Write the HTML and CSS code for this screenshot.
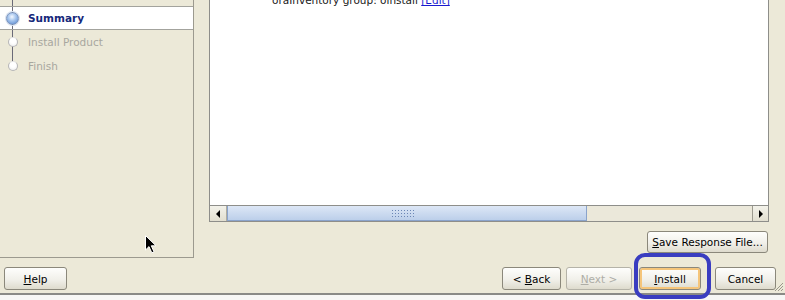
FILE: index.html
```html
<!DOCTYPE html>
<html lang="en">
<head>
    <meta charset="UTF-8">
    <title>Install - Summary</title>
    <link rel="stylesheet" href="styles.css">
</head>
<body>
    <div class="window">
        <div class="main">
            <div class="steps">
                <div class="step-gap"></div>
                <div class="step current"><span class="mark"><span class="node"></span></span>Summary</div>
                <div class="step"><span class="mark"><span class="dot"></span></span>Install Product</div>
                <div class="step last"><span class="mark"><span class="dot"></span></span>Finish</div>
            </div>
            <div class="content">
                <div class="panel">
                    <div class="view">
                        <div class="tree-row"><span class="branch"></span>oraInventory group: oinstall <a href="#">[Edit]</a></div>
                    </div>
                    <div class="hscroll">
                        <div class="arrow left"><span class="tri"></span></div>
                        <div class="track">
                            <div class="thumb"><span class="grip"></span></div>
                        </div>
                        <div class="arrow right"><span class="tri"></span></div>
                    </div>
                </div>
                <div class="panel-actions">
                    <button class="btn save"><u>S</u>ave Response File...</button>
                </div>
            </div>
        </div>

        <div class="footer">
            <button class="btn help"><u>H</u>elp</button>
            <div class="nav">
                <button class="btn back">&lt; <u>B</u>ack</button>
                <button class="btn next" disabled><u>N</u>ext &gt;</button>
                <button class="btn install"><u>I</u>nstall</button>
                <button class="btn cancel">Cancel</button>
            </div>
        </div>
        <div class="status"></div>
    </div>

    <!-- annotation drawn over the screenshot -->
    <div class="callout"></div>

    <svg class="grip-corner" width="12" height="12" viewBox="0 0 12 12">
        <path d="M11 3 L3 11 M11 6 L6 11 M11 9 L9 11" stroke="#9a978a" stroke-width="1"/>
    </svg>

    <svg class="cursor" width="13" height="19" viewBox="0 0 13 19">
        <path d="M0.5 0.5 L0.5 15 L4 11.6 L6.8 17.8 L9 16.8 L6.3 10.8 L11 10.8 Z" fill="#000" stroke="#fff" stroke-width="1"/>
    </svg>
</body>
</html>
```

FILE: styles.css
```css
body {
    margin: 0;
    width: 785px;
    height: 300px;
    overflow: hidden;
    position: relative;
    background: #ece9d8;
    font-family: "DejaVu Sans", sans-serif;
    font-size: 10.5px;
    color: #000;
}

.main {
    display: flex;
    gap: 15px;
    height: 258px;
}

/* wizard steps */

.steps {
    width: 194px;
    box-sizing: border-box;
    border-right: 1px solid #9c9a8f;
    border-bottom: 1px solid #9c9a8f;
}

.step-gap {
    height: 6px;
    background: linear-gradient(#6a6a78, #6a6a78) 12px 0 / 1px 100% no-repeat;
}

.step {
    display: flex;
    align-items: center;
    height: 24px;
    box-sizing: border-box;
    padding-left: 6px;
    color: #a8a79f;
    background: linear-gradient(#6a6a78, #6a6a78) 12px 0 / 1px 100% no-repeat;
}

.step.last {
    background-size: 1px 50%;
}

.step.current {
    color: #15287a;
    font-weight: bold;
    border-top: 1px solid #a3a39d;
    border-bottom: 1px solid #a3a39d;
    background: linear-gradient(#6a6a78, #6a6a78) 12px 0 / 1px 100% no-repeat, #fff;
}

.mark {
    width: 13px;
    display: flex;
    justify-content: center;
    margin-right: 9px;
}

.node {
    width: 11px;
    height: 11px;
    border-radius: 50%;
    border: 1px solid #7d95bd;
    box-shadow: 0 0 0 1px #d9e2f0;
    background: radial-gradient(circle at 45% 35%, #f4f8ff 0, #a9c7ee 40%, #4f82cc 100%);
}

.dot {
    width: 8px;
    height: 8px;
    border-radius: 50%;
    border: 1px solid #b6b6b8;
    border-top-color: #e4e4e4;
    background: radial-gradient(circle at 50% 35%, #fff 40%, #e8e8e8 100%);
}

/* summary panel */

.content {
    width: 560px;
}

.panel {
    height: 222px;
    box-sizing: border-box;
    border: 1px solid #8e8e8a;
    border-top: 0;
    background: #fff;
    display: flex;
    flex-direction: column;
}

.view {
    flex: 1;
    overflow: hidden;
}

.tree-row {
    margin-top: -6px;
    padding-left: 48px;
    line-height: 13px;
    color: #202020;
    white-space: nowrap;
}

.branch {
    display: inline-block;
    width: 10px;
    margin-right: 4px;
    vertical-align: 6px;
    border-bottom: 1px dotted #777;
}

.tree-row a {
    color: #1a1ad0;
}

.hscroll {
    height: 15px;
    display: flex;
    border-top: 1px solid #8e8e8a;
    background: #ebe8da;
}

.arrow {
    width: 16px;
    display: flex;
    align-items: center;
    justify-content: center;
    background: linear-gradient(#f3f2ea, #e2dfd0);
}

.arrow.left {
    border-right: 1px solid #b0ad9f;
}

.arrow.right {
    width: 15px;
    border-left: 1px solid #9c9a8f;
}

.arrow.left .tri {
    border-right: 4px solid #000;
    border-top: 4px solid transparent;
    border-bottom: 4px solid transparent;
}

.arrow.right .tri {
    border-left: 4px solid #000;
    border-top: 4px solid transparent;
    border-bottom: 4px solid transparent;
}

.track {
    flex: 1;
}

.thumb {
    width: 360px;
    height: 100%;
    box-sizing: border-box;
    border: 1px solid #8aa3cb;
    border-top: 0;
    background: linear-gradient(#dde7f6, #bccfea);
    display: flex;
    align-items: center;
    justify-content: center;
}

.grip {
    width: 24px;
    height: 9px;
    margin-right: 8px;
    background-image: radial-gradient(circle, #6b86b5 0.7px, transparent 0.9px);
    background-size: 3px 3px;
}

.panel-actions {
    display: flex;
    justify-content: flex-end;
    margin-top: 9px;
    padding-right: 1px;
}

/* buttons */

.btn {
    height: 22px;
    padding: 0;
    box-sizing: border-box;
    border: 1px solid #8b887b;
    border-radius: 3px;
    background: linear-gradient(#fefefc, #f1f0ea 55%, #dedbcd);
    font-family: inherit;
    font-size: 10.5px;
    color: #000;
}

.btn.save {
    width: 121px;
}

.footer {
    display: flex;
    justify-content: space-between;
    align-items: center;
    margin-top: 9px;
    height: 23px;
    padding: 0 9px 0 4px;
}

.footer .btn {
    height: 23px;
}

.btn.help {
    width: 63px;
}

.nav {
    display: flex;
}

.btn.back {
    width: 59px;
}

.btn.next {
    width: 66px;
    margin-left: 5px;
    color: #aeada6;
    border-color: #b5b3a8;
}

.btn.install {
    width: 62px;
    margin-left: 7px;
    box-shadow: inset 0 0 0 2px #f5c57a;
}

.btn.cancel {
    width: 61px;
    margin-left: 14px;
}

.status {
    margin-top: 3px;
    height: 7px;
    border-top: 2px solid #8a8a86;
    background: #f7f7f5;
}

/* overlays */

.callout {
    position: absolute;
    left: 634px;
    top: 253px;
    width: 77px;
    height: 46px;
    box-sizing: border-box;
    border: 4px solid #3a3dc0;
    border-radius: 11px;
}

.grip-corner {
    position: absolute;
    left: 772px;
    top: 280px;
}

.cursor {
    position: absolute;
    left: 145px;
    top: 235px;
}
```
